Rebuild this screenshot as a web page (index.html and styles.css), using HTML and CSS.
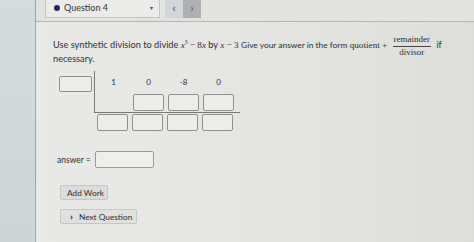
FILE: index.html
```html
<html>
  <head>
    <title>Question 4</title>
    <meta name="viewport" content="width=device-width, initial-scale=1.0" />
    <link rel="stylesheet" href="styles.css">
  </head>
  <body>
    <div class="page">
      <div class="side"></div>
      <div class="main">
        <div class="topbar">
          <div class="picker">
            <span class="dot"></span>
            <span class="qname">Question 4</span>
            <span class="caret">&#9662;</span>
          </div>
          <div class="nav">
            <span class="prev">&lsaquo;</span>
            <span class="next">&rsaquo;</span>
          </div>
        </div>
        <div class="question">
          <p class="prompt">Use synthetic division to divide <span class="m"><i>x</i><sup>3</sup> &minus; 8<i>x</i></span> by <span class="m"><i>x</i> &minus; 3</span> <span class="tail">Give your answer in the form</span> <span class="m">quotient + </span><span class="frac"><span class="num">remainder</span><span class="den">divisor</span></span> if</p>
          <p class="prompt2">necessary.</p>
          <div class="synth">
            <div class="divisor"><span class="box"></span></div>
            <div class="table">
              <div class="row nums">
                <span>1</span><span>0</span><span>-8</span><span>0</span>
              </div>
              <div class="row mid">
                <span></span><span class="box"></span><span class="box"></span><span class="box"></span>
              </div>
              <div class="row bottom">
                <span class="box"></span><span class="box"></span><span class="box"></span><span class="box"></span>
              </div>
            </div>
          </div>
          <div class="answer">
            <span>answer =</span>
            <span class="input"></span>
          </div>
          <div class="btn add">Add Work</div>
          <div class="btn nextq"><span class="chev">&rsaquo;</span>Next Question</div>
        </div>
      </div>
    </div>
  </body>
</html>
```

FILE: styles.css
```css
body {
  margin: 0;
  background: #e4e4e2;
  font-family: Lato, "Open Sans", sans-serif;
  color: #2f2f2f;
}
.page {
  display: flex;
  width: 474px;
  height: 242px;
  overflow: hidden;
}
.side {
  width: 35px;
  flex: none;
  background: linear-gradient(180deg, #d6dbde, #cfd4d7);
  border-right: 1px solid #9ea2a4;
}
.main {
  flex: 1;
  background: linear-gradient(90deg, #e9e9e7, #e2e2df 70%, #dcdcd8);
}
.topbar {
  height: 21px;
  display: flex;
  align-items: flex-start;
  padding-left: 9px;
  border-bottom: 1px solid #b5b5b2;
  background: #e2e2e0;
}
.picker {
  width: 115px;
  height: 18px;
  box-sizing: border-box;
  border: 1px solid #c4c4c2;
  border-top: none;
  background: #ebebea;
  display: flex;
  align-items: center;
  padding: 0 6px 2px 8px;
  font-size: 9px;
  color: #333;
}
.dot {
  width: 6px;
  height: 6px;
  border-radius: 50%;
  background: #25256a;
  margin-right: 4px;
}
.qname {
  flex: 1;
}
.caret {
  font-size: 6px;
  color: #444;
}
.nav {
  display: flex;
  margin-left: 5px;
  height: 18px;
}
.nav span {
  width: 18px;
  display: flex;
  align-items: center;
  justify-content: center;
  font-size: 12px;
  font-weight: bold;
  padding-bottom: 3px;
  box-sizing: border-box;
  color: #6a7080;
}
.prev {
  background: #d2d6da;
}
.next {
  background: #aeafb1;
}
.question {
  padding: 9px 0 0 17px;
}
.prompt {
  margin: 0;
  font-size: 9.2px;
  line-height: 27px;
  white-space: nowrap;
}
.tail {
  font-size: 8.4px;
}
.m {
  font-family: "Liberation Serif", serif;
  font-size: 9.2px;
}
sup {
  font-size: 5.5px;
  line-height: 0;
}
.frac {
  display: inline-block;
  vertical-align: middle;
  text-align: center;
  font-family: "Liberation Serif", serif;
  font-size: 9px;
  line-height: 11px;
  margin: 0 3px;
}
.num,
.den {
  display: block;
}
.num {
  border-bottom: 1px solid #444;
  padding: 0 1px 1px;
}
.prompt2 {
  margin: -6px 0 0 0;
  font-size: 9.2px;
}
.synth {
  display: flex;
  margin-top: 7px;
  margin-left: 6px;
}
.divisor {
  padding-top: 5px;
}
.box {
  display: block;
  width: 31px;
  height: 17px;
  box-sizing: border-box;
  border: 1px solid #8f8f8d;
  border-radius: 2px;
  background: #ececea;
}
.divisor .box {
  width: 33px;
  height: 16px;
}
.table {
  margin-left: 2px;
}
.row {
  display: flex;
  gap: 4px;
  padding-left: 3px;
}
.row span {
  width: 31px;
}
.row.nums {
  border-left: 1px solid #777;
  height: 21px;
  padding-bottom: 2px;
  align-items: center;
  font-size: 8px;
}
.row.nums span {
  text-align: center;
}
.row.mid {
  border-left: 1px solid #777;
  border-bottom: 1px solid #777;
  padding-bottom: 1px;
  width: 142px;
}
.row.bottom {
  padding-top: 1px;
}
.answer {
  display: flex;
  align-items: center;
  margin-top: 20px;
  margin-left: 4px;
  font-size: 8.5px;
}
.input {
  width: 59px;
  height: 17px;
  box-sizing: border-box;
  border: 1px solid #999;
  border-radius: 2px;
  background: #eeeeec;
  margin-left: 4px;
}
.btn {
  display: flex;
  align-items: center;
  white-space: nowrap;
  height: 15px;
  box-sizing: border-box;
  border: 1px solid #c6c6c4;
  border-radius: 2px;
  background: #dcdcda;
  font-size: 8.3px;
  padding: 0 6px;
  margin-left: 7px;
}
.add {
  margin-top: 17px;
  width: 48px;
}
.nextq {
  margin-top: 9px;
  width: 77px;
  background: #e0e0de;
}
.chev {
  font-size: 10px;
  font-weight: bold;
  margin: 0 6px 2px 3px;
}
```
